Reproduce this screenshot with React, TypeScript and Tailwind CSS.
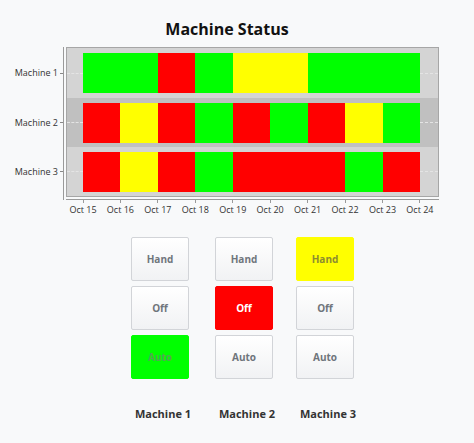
const GREEN = 'bg-[#00ff00]';
const RED = 'bg-[#ff0000]';
const YELLOW = 'bg-[#ffff00]';

const grow: Record<number, string> = { 1: 'flex-1', 2: 'flex-2', 3: 'flex-3' };

type Seg = { days: number; color: string };

const rows: { name: string; band: string; h: string; segs: Seg[] }[] = [
  {
    name: 'Machine 1',
    band: 'bg-[#d4d4d4]',
    h: 'h-[50px]',
    segs: [
      { days: 2, color: GREEN },
      { days: 1, color: RED },
      { days: 1, color: GREEN },
      { days: 2, color: YELLOW },
      { days: 3, color: GREEN },
    ],
  },
  {
    name: 'Machine 2',
    band: 'bg-[#c0c0c0]',
    h: 'h-[49px]',
    segs: [
      { days: 1, color: RED },
      { days: 1, color: YELLOW },
      { days: 1, color: RED },
      { days: 1, color: GREEN },
      { days: 1, color: RED },
      { days: 1, color: GREEN },
      { days: 1, color: RED },
      { days: 1, color: YELLOW },
      { days: 1, color: GREEN },
    ],
  },
  {
    name: 'Machine 3',
    band: 'bg-[#d4d4d4]',
    h: 'h-[49px]',
    segs: [
      { days: 1, color: RED },
      { days: 1, color: YELLOW },
      { days: 1, color: RED },
      { days: 1, color: GREEN },
      { days: 3, color: RED },
      { days: 1, color: GREEN },
      { days: 1, color: RED },
    ],
  },
];

const days = ['Oct 15', 'Oct 16', 'Oct 17', 'Oct 18', 'Oct 19', 'Oct 20', 'Oct 21', 'Oct 22', 'Oct 23', 'Oct 24'];

type Mode = 'Hand' | 'Off' | 'Auto';

const machines: { name: string; mode: Mode; ml: string }[] = [
  { name: 'Machine 1', mode: 'Auto', ml: 'ml-[131px]' },
  { name: 'Machine 2', mode: 'Off', ml: 'ml-[26px]' },
  { name: 'Machine 3', mode: 'Hand', ml: 'ml-[23px]' },
];

const activeStyle: Record<Mode, string> = {
  Hand: 'bg-[#ffff00] border-[#ffff00] text-[#8c8c30]',
  Off: 'bg-[#ff0000] border-[#ff0000] text-white',
  Auto: 'bg-[#00ff00] border-[#00ff00] text-[#52a852]',
};

function ModeButton({ label, active }: { label: Mode; active: boolean }) {
  const cls = active
    ? activeStyle[label]
    : 'bg-gradient-to-b from-white to-[#f1f2f4] border-[#d2d4d8] text-[#6f757c]';
  return (
    <div className={`flex h-[44px] w-[58px] items-center justify-center rounded-[2px] border text-[10px] font-bold ${cls}`}>
      {label}
    </div>
  );
}

export default function App() {
  return (
    <div className="h-[443px] w-[474px] overflow-hidden bg-[#f8f9fa] pt-[17px] font-['Open_Sans','Noto_Sans',sans-serif] text-[#222]">
      <h1 className="h-6 w-[454px] text-center text-[16px] font-bold leading-6 text-[#111]">Machine Status</h1>

      <div className="mt-[6px] flex">
        <div className="flex w-[63px] flex-col pt-px">
          {rows.map((r) => (
            <div key={r.name} className={`flex items-center justify-end ${r.h}`}>
              <span className="whitespace-nowrap text-[9px] leading-3 text-[#333]">{r.name}</span>
              <span className="ml-[2px] h-px w-[3px] bg-[#888]" />
            </div>
          ))}
        </div>
        <div className="h-[153px] w-px bg-[#9a9a9a]" />
        <div className="ml-[2px] flex flex-col">
          <div className="w-[373px] border border-[#a6a6a6]">
            {rows.map((r) => (
              <div key={r.name} className={`flex items-center ${r.band} ${r.h}`}>
                <div className="w-[16px] border-t border-dashed border-[#e4e4e4]" />
                <div className="flex h-[40px] w-[337px]">
                  {r.segs.map((s, i) => (
                    <div key={i} className={`${grow[s.days]} ${s.color}`} />
                  ))}
                </div>
                <div className="w-[18px] border-t border-dashed border-[#e4e4e4]" />
              </div>
            ))}
          </div>
          <div className="mt-[2px] h-px w-[373px] bg-[#9a9a9a]" />
          <div className="ml-[17px] flex w-[337px] justify-between">
            {days.map((d) => (
              <div key={d} className="flex w-0 flex-col items-center">
                <span className="h-[3px] w-px bg-[#9a9a9a]" />
                <span className="mt-px whitespace-nowrap text-[9px] leading-3 text-[#333]">{d}</span>
              </div>
            ))}
          </div>
        </div>
      </div>

      <div className="mt-[21px] flex">
        {machines.map((m) => (
          <div key={m.name} className={`flex w-[58px] flex-col ${m.ml}`}>
            <div className="flex flex-col gap-[5px]">
              {(['Hand', 'Off', 'Auto'] as Mode[]).map((mode) => (
                <ModeButton key={mode} label={mode} active={m.mode === mode} />
              ))}
            </div>
            <div className="mt-[27px] flex justify-center pl-[6px]">
              <span className="whitespace-nowrap text-[11px] font-bold leading-4 text-[#333]">{m.name}</span>
            </div>
          </div>
        ))}
      </div>
    </div>
  );
}
